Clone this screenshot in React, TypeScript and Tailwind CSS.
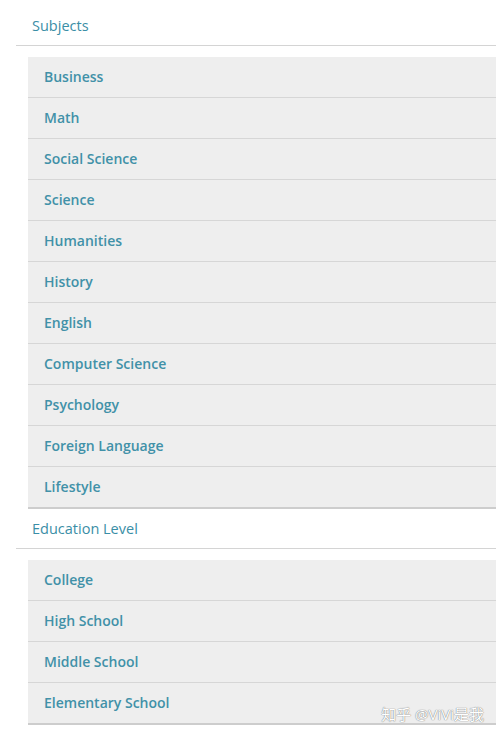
const subjects = [
  'Business',
  'Math',
  'Social Science',
  'Science',
  'Humanities',
  'History',
  'English',
  'Computer Science',
  'Psychology',
  'Foreign Language',
  'Lifestyle',
];

const levels = ['College', 'High School', 'Middle School', 'Elementary School'];

function Section({ title, items }: { title: string; items: string[] }) {
  return (
    <div>
      <div className="ml-4 flex h-10 items-center border-b border-[#d4d4d4] pl-4 text-[14.5px] text-[#3a8ea6]">
        {title}
      </div>
      <ul className="mt-[11px] ml-7 border-b-2 border-[#cdcdcd] bg-[#eeeeee]">
        {items.map((item, i) => (
          <li
            key={item}
            className={
              i < items.length - 1
                ? 'flex h-[41px] items-center border-b border-[#d6d6d6] px-4 pb-px text-[14px] font-semibold text-[#4191a8]'
                : 'flex h-[40px] items-center px-4 pb-px text-[14px] font-semibold text-[#4191a8]'
            }
          >
            {item}
          </li>
        ))}
      </ul>
    </div>
  );
}

export default function App() {
  return (
    <div
      className="relative min-h-[737px] bg-white pt-[6px]"
      style={{ fontFamily: '"Open Sans", "Noto Sans CJK SC", sans-serif' }}
    >
      <Section title="Subjects" items={subjects} />
      <Section title="Education Level" items={levels} />
      <div className="absolute top-[703px] right-[12px] text-[15px] text-white [text-shadow:0_0_1px_#777,0_0_1px_#999]">
        知乎 @ViVi是我
      </div>
    </div>
  );
}
